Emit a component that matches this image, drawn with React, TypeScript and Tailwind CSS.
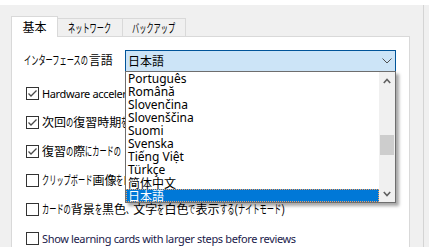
import React from "react";

const latin = "[font-family:'Noto_Sans','Noto_Sans_CJK_JP',sans-serif]";
const cjkFont = "[font-family:'Noto_Sans_CJK_JP','Noto_Sans',sans-serif]";

const items = [
  "Português",
  "Română",
  "Slovenčina",
  "Slovenščina",
  "Suomi",
  "Svenska",
  "Tiếng Việt",
  "Türkçe",
  "简体中文",
  "日本語",
];

const isNarrow = (ch: string) => /[\u3040-\u30ff\u3001]/.test(ch);

function Jp({ text }: { text: string }) {
  const chars = Array.from(text);
  const runs: { narrow: boolean; s: string }[] = [];
  for (const ch of chars) {
    const n = isNarrow(ch);
    const last = runs[runs.length - 1];
    if (last && last.narrow === n) last.s += ch;
    else runs.push({ narrow: n, s: ch });
  }
  return (
    <span className={cjkFont + " whitespace-nowrap"}>
      {runs.map((r, i) =>
        r.narrow ? (
          <span
            key={i}
            className="inline-block whitespace-nowrap align-top"
            style={{ width: `${Array.from(r.s).length * 7.2}px` }}
          >
            <span className="inline-block origin-left scale-x-[0.6]">{r.s}</span>
          </span>
        ) : (
          <span key={i} className="align-top">{r.s}</span>
        )
      )}
    </span>
  );
}

function Check({ checked }: { checked: boolean }) {
  return (
    <div className="w-[13px] h-[13px] border border-[#333333] bg-white flex items-center justify-center shrink-0">
      {checked && (
        <svg width="11" height="11" viewBox="0 0 11 11">
          <polyline points="1.5,5.5 4,8 9.5,2.5" fill="none" stroke="#4a4a4a" strokeWidth="1.3" />
        </svg>
      )}
    </div>
  );
}

function Row({
  checked,
  text,
  jp,
  color,
  clip,
}: {
  checked: boolean;
  text: string;
  jp?: boolean;
  color?: string;
  clip?: boolean;
}) {
  return (
    <div className="h-[29px] flex items-center ml-[2px] gap-[3px]">
      <Check checked={checked} />
      <div className={clip ? "max-w-[83px] overflow-hidden" : ""}>
        <div
          className={
            (jp ? "text-[12px] leading-[16px]" : latin + " text-[11px] tracking-[-0.35px] leading-none") +
            " whitespace-nowrap " +
            (color ?? "text-black")
          }
        >
          {jp ? <Jp text={text} /> : text}
        </div>
      </div>
    </div>
  );
}

export default function App() {
  return (
    <div className="w-[429px] h-[247px] bg-[#f0f0f0] overflow-hidden relative flex flex-col">
      <div className="h-[5px] bg-white shrink-0" />
      <div className="flex flex-1">
        <div className="w-[410px] flex flex-col">
          {/* tabs */}
          <div className="flex items-end h-[21px] mt-[11px] ml-[11px] relative z-10 -mb-px">
            <div className={"h-[21px] w-[47px] bg-white border-l border-t border-r border-[#d9d9d9] flex items-center justify-center text-[12px] text-black " + cjkFont}>
              基本
            </div>
            <div className="h-[18px] mb-px w-[65px] bg-[#f0f0f0] border-t border-r border-[#d9d9d9] flex items-center justify-center text-[12px] leading-[16px] text-black pt-px">
              <Jp text="ネットワーク" />
            </div>
            <div className="h-[18px] mb-px w-[63px] bg-[#f0f0f0] border-t border-r border-[#d9d9d9] flex items-center justify-center text-[12px] leading-[16px] text-black pt-px">
              <Jp text="バックアップ" />
            </div>
          </div>
          {/* panel */}
          <div className="ml-[11px] w-[399px] flex-1 bg-white border border-[#d9d9d9] pl-[12px] flex flex-col">
            <div className="mt-[13px] flex items-center h-[21px]">
              <div className="w-[101px] text-[12px] leading-[16px] text-black whitespace-nowrap">
                <Jp text="インターフェースの言語" />
              </div>
              <div className="relative w-[271px] h-[21px] z-20">
                <div className="h-[21px] bg-[#cce4f7] border-t border-l border-r border-[#005499] flex items-center pl-[2px]">
                  <span className={"text-[12px] text-black " + cjkFont}>日本語</span>
                  <svg className="absolute right-[4px] top-[8px]" width="10" height="6" viewBox="0 0 10 6">
                    <polyline points="0.5,0.5 5,5 9.5,0.5" fill="none" stroke="#505050" strokeWidth="1" />
                  </svg>
                </div>
                {/* dropdown list */}
                <div className="absolute left-0 top-[21px] w-[271px] h-[132px] bg-white border border-[#6e6e6e] shadow-[3px_3px_3px_rgba(0,0,0,0.35)] flex">
                  <div className="flex-1 flex flex-col">
                    {items.map((it, i) => {
                      const sel = i === items.length - 1;
                      const isCjk = /[\u3000-\u9fff]/.test(it);
                      return (
                        <div
                          key={it}
                          className={
                            "h-[13px] flex items-center whitespace-nowrap text-[12px] " +
                            (isCjk ? cjkFont + " " : latin + " ") +
                            (sel
                              ? "bg-[#0078d7] text-white border border-dotted border-[#f5a060] pl-[1px]"
                              : "text-black pl-[2px]")
                          }
                        >
                          <span className="leading-none">{it}</span>
                        </div>
                      );
                    })}
                  </div>
                  <div className="w-[16px] bg-[#f0f0f0] flex flex-col">
                    <div className="h-[17px] flex items-center justify-center">
                      <svg width="8" height="6" viewBox="0 0 8 6">
                        <polyline points="0.8,5 4,1.5 7.2,5" fill="none" stroke="#606060" strokeWidth="1.6" />
                      </svg>
                    </div>
                    <div className="h-[46px]" />
                    <div className="h-[20px] mx-[1px] bg-[#cdcdcd]" />
                    <div className="flex-1" />
                    <div className="h-[17px] flex items-center justify-center">
                      <svg width="8" height="6" viewBox="0 0 8 6">
                        <polyline points="0.8,1 4,4.5 7.2,1" fill="none" stroke="#606060" strokeWidth="1.6" />
                      </svg>
                    </div>
                  </div>
                </div>
              </div>
            </div>
            <div className="mt-[8px] flex flex-col">
              <Row checked clip text="Hardware acceler" />
              <Row checked clip jp text="次回の復習時期を" />
              <Row checked clip jp text="復習の際にカードの" />
              <Row checked={false} clip jp text="クリップボード画像をP" />
              <Row checked={false} jp text="カードの背景を黒色、文字を白色で表示する(ナイトモード)" />
              <Row checked={false} text="Show learning cards with larger steps before reviews" color="text-[#1a1a4a]" />
            </div>
          </div>
        </div>
        <div className="w-[13px]" />
        <div className="w-px bg-[#d4d4d4]" />
        <div className="flex-1 bg-[#f0f0f0]" />
      </div>
    </div>
  );
}
